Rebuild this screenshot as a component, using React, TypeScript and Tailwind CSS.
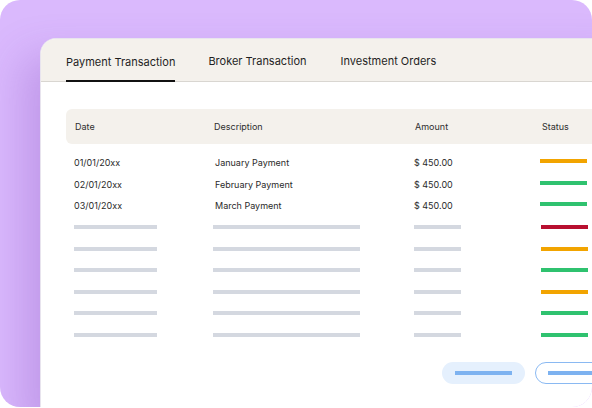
import React from "react";

const font = { fontFamily: "Inter, 'Noto Sans', sans-serif" };

type Row = { date?: string; desc?: string; amount?: string; status: string };

const rows: Row[] = [
  { date: "01/01/20xx", desc: "January Payment", amount: "$ 450.00", status: "bg-[#f2a400]" },
  { date: "02/01/20xx", desc: "February Payment", amount: "$ 450.00", status: "bg-[#2fc26f]" },
  { date: "03/01/20xx", desc: "March Payment", amount: "$ 450.00", status: "bg-[#2fc26f]" },
  { status: "bg-[#b80f30]" },
  { status: "bg-[#f2a400]" },
  { status: "bg-[#2fc26f]" },
  { status: "bg-[#f2a400]" },
  { status: "bg-[#2fc26f]" },
  { status: "bg-[#2fc26f]" },
];

export default function App() {
  return (
    <div className="w-[592px] h-[408px] bg-white overflow-hidden" style={font}>
      <div className="w-[592px] h-[407px] rounded-[20px] bg-[#dab9fd] overflow-hidden pt-[38px] pl-[40px]">
        <div className="w-[603px] h-[380px] bg-white rounded-tl-[16px] border-l border-t border-[#e8e4ee] overflow-hidden shadow-[-18px_18px_40px_rgba(120,60,180,0.25)]">
          {/* Tabs */}
          <div className="h-[43px] bg-[#f4f1ec] border-b border-[#d9d6d1] flex items-end pl-[25px] gap-[33px]">
            <div className="h-full flex flex-col justify-end">
              <div className="text-[11px] text-[#1f1f1f] pb-[12px] leading-none">Payment Transaction</div>
              <div className="h-[2px] bg-[#111] mb-[-1px]" />
            </div>
            <div className="text-[11px] text-[#1f1f1f] pb-[14px] leading-none">Broker Transaction</div>
            <div className="text-[11px] text-[#1f1f1f] pb-[14px] leading-none ml-[1px]">Investment Orders</div>
          </div>

          <div className="px-[25px] pt-[27px]">
            {/* Header */}
            <div className="h-[35px] bg-[#f4f1ec] rounded-[6px] grid grid-cols-[139px_201px_127px_1fr] items-center pl-[9px] text-[9px] text-[#2e2e2e]">
              <div>Date</div>
              <div>Description</div>
              <div>Amount</div>
              <div>Status</div>
            </div>

            {/* Rows */}
            <div className="pt-[8px]">
              {rows.map((r, i) => (
                <div key={i} className="h-[21.5px] grid grid-cols-[139px_201px_127px_1fr] items-center pl-[8px] text-[9px] text-[#2a2a2a]">
                  {r.date ? (
                    <>
                      <div>{r.date}</div>
                      <div className="pl-[2px]">{r.desc}</div>
                      <div>{r.amount}</div>
                    </>
                  ) : (
                    <>
                      <div className="h-[4px] w-[83px] bg-[#d4d8e0]" />
                      <div className="h-[4px] w-[147px] bg-[#d4d8e0]" />
                      <div className="h-[4px] w-[47px] bg-[#d4d8e0]" />
                    </>
                  )}
                  <div className={`h-[4px] w-[47px] ${r.status} ${i < 3 ? "-mt-[3px] -ml-[1px]" : ""}`} />
                </div>
              ))}
            </div>

            {/* Buttons */}
            <div className="flex justify-end gap-[10px] mt-[16px]">
              <div className="w-[83px] h-[22px] rounded-full bg-[#e5f0fd] flex items-center justify-center">
                <div className="w-[57px] h-[4px] bg-[#7db2f0]" />
              </div>
              <div className="w-[83px] h-[22px] rounded-full border border-[#8ab9f2] flex items-center justify-center">
                <div className="w-[57px] h-[4px] bg-[#7db2f0]" />
              </div>
            </div>
          </div>
        </div>
      </div>
    </div>
  );
}
